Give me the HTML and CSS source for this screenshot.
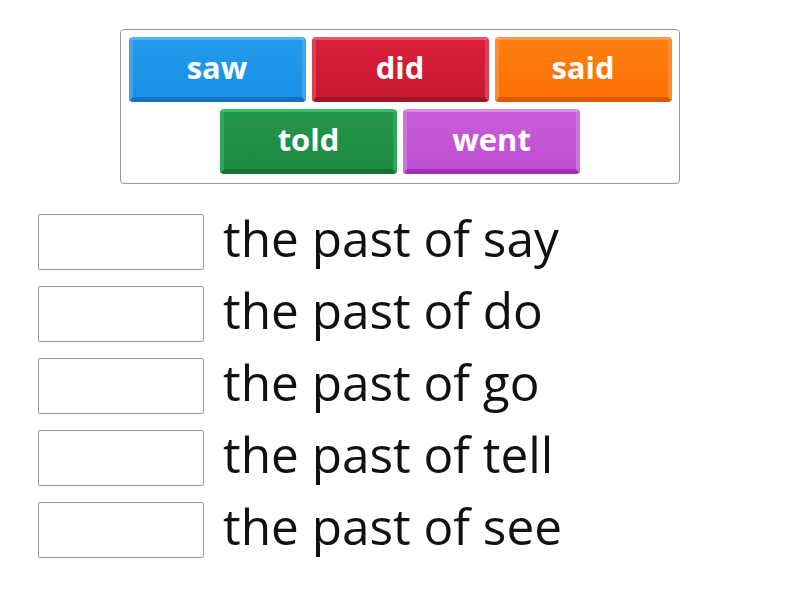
FILE: index.html
```html
<!DOCTYPE html>
<html>
<head>
<meta charset="utf-8">
<link rel="stylesheet" href="styles.css">
</head>
<body>
<div class="bank">
  <div class="tile blue">saw</div>
  <div class="tile red">did</div>
  <div class="tile orange">said</div>
  <div class="tile green">told</div>
  <div class="tile purple">went</div>
</div>
<div class="rows">
  <div class="row"><div class="slot"></div><div class="clue">the past of say</div></div>
  <div class="row"><div class="slot"></div><div class="clue">the past of do</div></div>
  <div class="row"><div class="slot"></div><div class="clue">the past of go</div></div>
  <div class="row"><div class="slot"></div><div class="clue">the past of tell</div></div>
  <div class="row"><div class="slot"></div><div class="clue">the past of see</div></div>
</div>
</body>
</html>
```
FILE: styles.css
```css
html, body {
  margin: 0;
  padding: 0;
  background: #fff;
  font-family: "Open Sans", "DejaVu Sans", sans-serif;
}
.bank {
  box-sizing: border-box;
  margin: 29px 0 0 120px;
  width: 560px;
  height: 155px;
  border: 1px solid #9a9a9a;
  border-radius: 4px;
  padding: 7px 7px 8px;
  display: flex;
  flex-wrap: wrap;
  justify-content: center;
  align-content: flex-start;
  gap: 7px 6px;
}
.tile {
  box-sizing: border-box;
  width: 177px;
  height: 65px;
  border-radius: 4px;
  color: #fff;
  font-weight: 700;
  font-size: 31px;
  display: flex;
  align-items: center;
  justify-content: center;
  padding-bottom: 4px;
  border-style: solid;
  border-width: 3px 4px 5px 4px;
}
.blue {
  background: linear-gradient(#229bec, #1a8fe6);
  border-color: #55b2f0 #3ea6ee #1273c4 #3ea6ee;
}
.red {
  background: linear-gradient(#da1e3a, #c81a33);
  border-color: #e35566 #dc3e52 #a3132a #dc3e52;
}
.orange {
  background: linear-gradient(#ff7f12, #fb7004);
  border-color: #ff9a48 #ff8b30 #d85c00 #ff8b30;
}
.green {
  background: linear-gradient(#23954a, #1d8a42);
  border-color: #3bbc66 #2ca956 #157234 #2ca956;
}
.purple {
  background: linear-gradient(#c95ed8, #bf4dd2);
  border-color: #d98ae4 #cf72dc #a52fba #cf72dc;
}
.rows {
  margin: 30px 0 0 38px;
  display: flex;
  flex-direction: column;
  gap: 16px;
}
.row {
  display: flex;
  align-items: center;
  gap: 19px;
}
.slot {
  box-sizing: border-box;
  width: 166px;
  height: 56px;
  border: 1px solid #9a9a9a;
  border-radius: 2px;
  background: #fff;
}
.clue {
  font-size: 49.5px;
  color: #111;
  line-height: 56px;
  margin-top: -9px;
}
```
